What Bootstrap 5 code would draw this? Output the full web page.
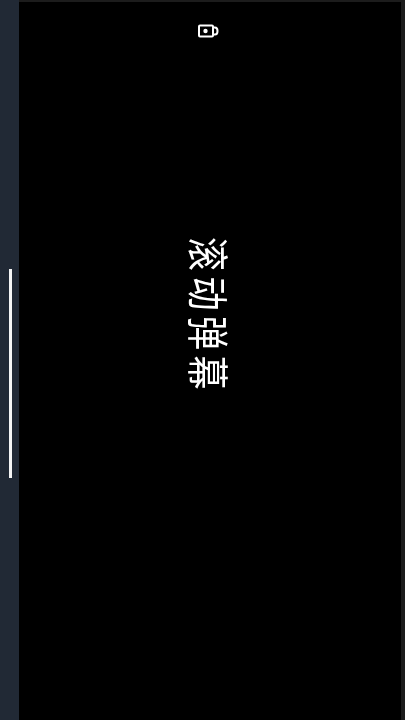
<!DOCTYPE html>
<html lang="zh">
<head>
<meta charset="utf-8">
<title>滚动弹幕</title>
<link rel="stylesheet" href="https://cdn.jsdelivr.net/npm/bootstrap@5.3.0/dist/css/bootstrap.min.css">
<style>
html, body { height: 100%; background: #000; overflow: hidden; }
.rail { width: 19px; background: #212935; }
.rail-bar { width: 3.5px; height: 209px; margin-left: 8.75px; margin-top: 269px; background: #f4f4f4; filter: blur(.4px); }
.stage { background: #000; border-top: 2px solid #1c1c1c; border-right: 4px solid #1c1c1c; }
.lock-icon { width: 21px; height: 14px; margin-top: 22px; margin-right: 4px; filter: blur(.4px); }
.scroll-text {
  margin-top: 199px;
  margin-right: 2px;
  writing-mode: vertical-rl;
  text-orientation: sideways;
  font-family: "Noto Sans CJK SC", sans-serif;
  font-size: 34px;
  font-weight: 400;
  line-height: 46px;
  letter-spacing: 5.5px;
  color: #fff;
  transform: scaleX(1.25);
  filter: blur(.4px);
}
</style>
</head>
<body>
<div class="d-flex h-100">
  <div class="rail flex-shrink-0"><div class="rail-bar"></div></div>
  <div class="stage flex-grow-1 d-flex flex-column align-items-center">
    <svg class="lock-icon" viewBox="0 0 21 14" fill="none" stroke="#fff" stroke-width="2" aria-hidden="true">
      <rect x="1" y="1.5" width="14" height="11" rx="1"/>
      <path d="M15 3.5h2a2.5 3.5 0 0 1 0 7H15"/>
      <circle cx="7.5" cy="7" r="2.2" fill="#fff" stroke="none"/>
    </svg>
    <div class="scroll-text">滚动弹幕</div>
  </div>
</div>
<script src="https://cdn.jsdelivr.net/npm/bootstrap@5.3.0/dist/js/bootstrap.bundle.min.js"></script>
</body>
</html>
